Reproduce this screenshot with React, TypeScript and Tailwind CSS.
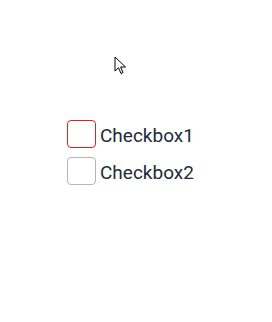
import React, { useState } from 'react';

function Check({ label, active, checked, onToggle }: { label: string; active?: boolean; checked: boolean; onToggle: () => void }) {
  return (
    <div className="flex items-center gap-[4px] cursor-pointer" onClick={onToggle}>
      <div
        className={
          active
            ? 'w-[29px] h-[28px] rounded-[4px] border border-[#e02020] bg-white'
            : 'w-[29px] h-[28px] rounded-[4px] border border-[#b5b5b5] bg-white'
        }
      >
        {checked && (
          <svg viewBox="0 0 28 28" className="w-full h-full">
            <path d="M7 14l5 5 9-10" fill="none" stroke="#007dff" strokeWidth="2" />
          </svg>
        )}
      </div>
      <span className="text-[19px] leading-none pt-[2px] text-[#222b38] font-['Roboto',sans-serif]">{label}</span>
    </div>
  );
}

export default function App() {
  const [a, setA] = useState(false);
  const [b, setB] = useState(false);
  return (
    <div className="relative w-[272px] h-[322px] bg-white">
      {/* mouse pointer */}
      <svg className="absolute left-[114px] top-[56px]" width="14" height="20" viewBox="0 0 14 20">
        <path d="M1 1v14l3.5-3.3 2.5 5.8 2-0.9-2.4-5.6h4.9z" fill="white" stroke="black" strokeWidth="1" strokeLinejoin="round" />
      </svg>
      <div className="flex flex-col gap-[9px] pt-[120px] pl-[67px]">
        <Check label="Checkbox1" active checked={a} onToggle={() => setA(!a)} />
        <Check label="Checkbox2" checked={b} onToggle={() => setB(!b)} />
      </div>
    </div>
  );
}
